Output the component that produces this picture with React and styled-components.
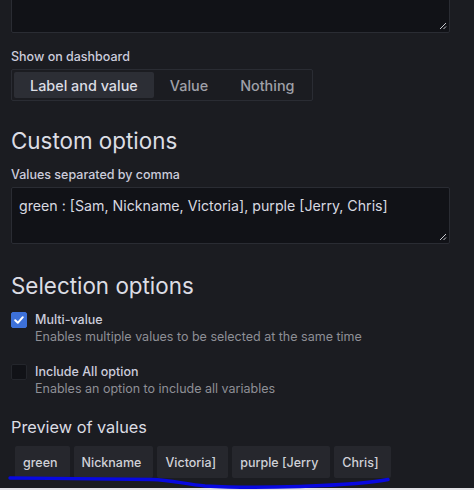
import React from "react";
import styled, { createGlobalStyle } from "styled-components";

const GlobalStyle = createGlobalStyle`
  html, body { margin: 0; padding: 0; background: #1b1c21; overflow: hidden; }
  body { font-family: Inter, "Noto Sans", sans-serif; color: #ccccdc; -webkit-font-smoothing: antialiased; }
  * { box-sizing: border-box; }
`;

const Screen = styled.div`
  position: relative;
  width: 474px;
  height: 490px;
  overflow: hidden;
  background: #1b1c21;
`;

const Page = styled.div`
  display: flex;
  flex-direction: column;
  padding: 0 24px 0 11px;
`;

const TextArea = styled.div`
  position: relative;
  height: ${(p) => p.$h}px;
  margin-top: ${(p) => p.$mt || 0}px;
  background: #111217;
  border: 1px solid #2a2c33;
  border-radius: 2px;
  padding: 8px 7px;
  font-size: 14.2px;
  line-height: 20px;
  color: #d8d9e0;
  white-space: nowrap;
`;

const Grip = styled.svg`
  position: absolute;
  right: 2px;
  bottom: 2px;
`;

const FieldLabel = styled.div`
  margin-top: ${(p) => p.$mt}px;
  font-size: 12.5px;
  font-weight: 500;
  line-height: 16px;
  color: #ccccdc;
`;

const RadioGroup = styled.div`
  margin-top: 4px;
  align-self: flex-start;
  display: flex;
  height: 32px;
  padding: 2px;
  border: 1px solid #2a2c33;
  border-radius: 2px;
`;

const RadioOption = styled.div`
  display: flex;
  align-items: center;
  height: 26px;
  padding: 0 16px;
  background: ${(p) => (p.$active ? "#2c2e35" : "transparent")};
  color: ${(p) => (p.$active ? "#dcdde4" : "#9fa0a8")};
  font-size: 14.4px;
  font-weight: 500;
  border-radius: 2px;
`;

const Heading = styled.h3`
  margin: ${(p) => p.$mt}px 0 0;
  font-size: 22.4px;
  font-weight: 400;
  line-height: 28px;
  color: #dcdde4;
`;

const SubHeading = styled.h4`
  margin: ${(p) => p.$mt}px 0 0;
  font-size: 16.3px;
  font-weight: 400;
  line-height: 24px;
  color: #dcdde4;
`;

const CheckRow = styled.div`
  margin-top: ${(p) => p.$mt}px;
  display: flex;
  gap: 8px;
`;

const Box = styled.div`
  width: 16px;
  height: 16px;
  flex: none;
  border-radius: 2px;
  display: flex;
  align-items: center;
  justify-content: center;
  background: ${(p) => (p.$checked ? "#3d71d9" : "#111217")};
  border: 1px solid ${(p) => (p.$checked ? "#3d71d9" : "#24262c")};
`;

const CheckText = styled.div`
  display: flex;
  flex-direction: column;
`;

const CheckLabel = styled.div`
  font-size: 12.5px;
  font-weight: 500;
  line-height: 16px;
  color: #ccccdc;
`;

const CheckDesc = styled.div`
  font-size: 12.5px;
  line-height: 18px;
  color: #8e8f96;
`;

const Chips = styled.div`
  margin: 7px 0 0 4px;
  display: flex;
  gap: 4px;
`;

const Chip = styled.div`
  height: 32px;
  padding: 0 12px 0 8px;
  display: flex;
  align-items: center;
  background: #26272d;
  border-radius: 2px;
  font-size: 12.5px;
  font-weight: 500;
  color: #d0d1d8;
`;

const Scribble = styled.svg`
  position: absolute;
  left: 0;
  top: 0;
  pointer-events: none;
`;

const BottomStrip = styled.div`
  position: absolute;
  left: 0;
  right: 0;
  bottom: 0;
  height: 2px;
  background: #e4e4e8;
`;

const Check = ({ checked }) => (
  <Box $checked={checked}>
    {checked && (
      <svg width="12" height="12" viewBox="0 0 12 12">
        <path d="M2.2 6.3 L4.8 8.8 L9.8 3.2" fill="none" stroke="#fff" strokeWidth="2" strokeLinecap="round" strokeLinejoin="round" />
      </svg>
    )}
  </Box>
);

const ResizeGrip = () => (
  <Grip width="8" height="8" viewBox="0 0 8 8">
    <path d="M7 1 L1 7 M7 4.5 L4.5 7" stroke="#c8c9d0" strokeWidth="1" />
  </Grip>
);

export default function App() {
  const chips = ["green", "Nickname", "Victoria]", "purple [Jerry", "Chris]"];
  return (
    <>
      <GlobalStyle />
      <Screen>
        <Page>
          <TextArea $h={74} $mt={-41}>
            <ResizeGrip />
          </TextArea>
          <FieldLabel $mt={16}>Show on dashboard</FieldLabel>
          <RadioGroup>
            <RadioOption $active>Label and value</RadioOption>
            <RadioOption>Value</RadioOption>
            <RadioOption>Nothing</RadioOption>
          </RadioGroup>

          <Heading $mt={26}>Custom options</Heading>
          <FieldLabel $mt={12}>Values separated by comma</FieldLabel>
          <TextArea $h={57} $mt={4}>
            green : [Sam, Nickname, Victoria], purple [Jerry, Chris]
            <ResizeGrip />
          </TextArea>

          <Heading $mt={28}>Selection options</Heading>
          <CheckRow $mt={12}>
            <Check checked />
            <CheckText>
              <CheckLabel>Multi-value</CheckLabel>
              <CheckDesc>Enables multiple values to be selected at the same time</CheckDesc>
            </CheckText>
          </CheckRow>
          <CheckRow $mt={18}>
            <Check />
            <CheckText>
              <CheckLabel>Include All option</CheckLabel>
              <CheckDesc>Enables an option to include all variables</CheckDesc>
            </CheckText>
          </CheckRow>

          <SubHeading $mt={17}>Preview of values</SubHeading>
          <Chips>
            {chips.map((c) => (
              <Chip key={c}>{c}</Chip>
            ))}
          </Chips>
        </Page>
        <BottomStrip />
        <Scribble width="474" height="490" viewBox="0 0 474 490">
          <path
            d="M10 478 C60 478.5 120 479 152 479.5 C170 480 185 484 205 486 C230 487.5 270 487.5 300 486.5 C340 485 370 483.5 388 479.5"
            fill="none"
            stroke="#0808e0"
            strokeWidth="3.4"
            strokeLinecap="round"
          />
        </Scribble>
      </Screen>
    </>
  );
}
